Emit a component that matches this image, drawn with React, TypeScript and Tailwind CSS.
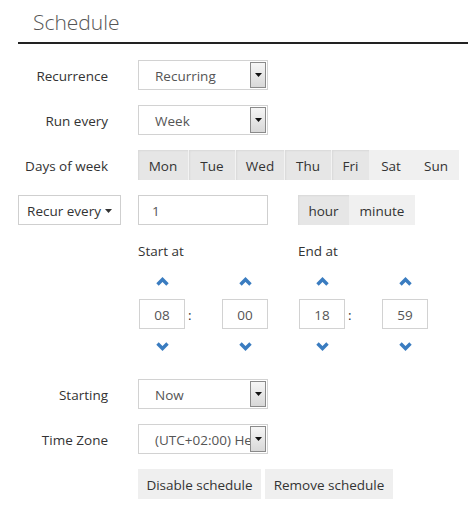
import React from "react";

function Arrow() {
  return (
    <div className="my-[1px] mr-[1px] w-[16px] self-stretch border border-[#8a8a8a] bg-gradient-to-b from-[#f6f6f6] to-[#d8d8d8] flex items-center justify-center">
      <svg width="7" height="4" viewBox="0 0 7 4">
        <polygon points="0,0 7,0 3.5,4" fill="#111" />
      </svg>
    </div>
  );
}

function Select({ value }: { value: string }) {
  return (
    <div className="flex h-[30px] w-[130px] border border-[#d2d2d2] bg-white">
      <div className="flex-1 overflow-hidden whitespace-nowrap pl-[16px] pt-[1px] text-[13.5px] leading-[28px] text-[#555]">{value}</div>
      <Arrow />
    </div>
  );
}

function Row({ label, children }: { label?: string; children: React.ReactNode }) {
  return (
    <div className="flex h-[30px] items-center">
      <div className="w-[120px] whitespace-nowrap pr-[30px] pt-[2px] text-right text-[13.5px] text-[#333]">{label}</div>
      {children}
    </div>
  );
}

function Chevron({ up }: { up?: boolean }) {
  return (
    <div className="flex h-[22px] w-[46px] items-center justify-center">
      <svg width="13" height="9" viewBox="0 0 13 9">
        <path
          d={up ? "M1.5 7.5 L6.5 2.5 L11.5 7.5" : "M1.5 1.5 L6.5 6.5 L11.5 1.5"}
          fill="none"
          stroke="#3a7cc0"
          strokeWidth="3.4"
          strokeLinecap="butt"
          strokeLinejoin="miter"
        />
      </svg>
    </div>
  );
}

function TimeInput({ v }: { v: string }) {
  return (
    <div className="h-[30px] w-[46px] border border-[#d2d2d2] bg-white pt-[1px] text-center text-[13.5px] leading-[28px] text-[#555]">{v}</div>
  );
}

function TimeGroup({ label, a, b }: { label: string; a: string; b: string }) {
  return (
    <div className="flex flex-col">
      <div className="h-[22px] text-[13.5px] leading-[22px] text-[#333]">{label}</div>
      <div className="mt-[8px] flex">
        <div className="ml-[1px] flex flex-col">
          <Chevron up />
          <div className="mt-[7px]"><TimeInput v={a} /></div>
          <div className="mt-[6px]"><Chevron /></div>
        </div>
        <div className="w-[37px] pl-[3px] pt-[30px] text-[13.5px] leading-[30px] text-[#333]">:</div>
        <div className="flex flex-col">
          <Chevron up />
          <div className="mt-[7px]"><TimeInput v={b} /></div>
          <div className="mt-[6px]"><Chevron /></div>
        </div>
      </div>
    </div>
  );
}

export default function App() {
  const days: [string, string, boolean][] = [
    ["Mon", "w-[50px]", true],
    ["Tue", "w-[47px]", true],
    ["Wed", "w-[49px]", true],
    ["Thu", "w-[47px]", true],
    ["Fri", "w-[38px]", true],
    ["Sat", "w-[44px]", false],
    ["Sun", "w-[46px]", false],
  ];
  return (
    <div className="h-[519px] w-[474px] bg-white font-['Open_Sans','Liberation_Sans',sans-serif]">
      <div className="ml-[18px] w-[450px]">
        <div className="h-[44px] border-b-2 border-[#222] pl-[15px] pt-[7px] text-[21px] font-light leading-[30px] text-[#555]">
          Schedule
        </div>
        <div className="mt-[16px] flex flex-col gap-[15px]">
          <Row label="Recurrence"><Select value="Recurring" /></Row>
          <Row label="Run every"><Select value="Week" /></Row>
          <Row label="Days of week">
            <div className="flex h-[30px] bg-[#f0f0f0]">
              {days.map(([d, w, sel], i) => (
                <div
                  key={d}
                  className={`${w} flex items-center justify-center pt-[2px] text-[13.5px] text-[#333] ${sel ? "bg-[#e6e6e6] shadow-[inset_1px_1px_2px_rgba(0,0,0,0.06)]" : ""} ${sel && i > 0 ? "border-l border-[#f3f3f3]" : ""}`}
                >
                  {d}
                </div>
              ))}
            </div>
          </Row>
          <div className="flex h-[30px] items-center">
            <div className="flex h-[30px] w-[103px] items-center justify-center border border-[#cfcfcf] bg-white pt-[2px] text-[13.5px] text-[#333]">
              Recur every
              <svg className="ml-[4px]" width="7" height="4" viewBox="0 0 7 4">
                <polygon points="0,0 7,0 3.5,4" fill="#333" />
              </svg>
            </div>
            <div className="ml-[17px] h-[30px] w-[130px] border border-[#cfcfcf] bg-white pl-[13px] pt-[1px] text-[13.5px] leading-[28px] text-[#555]">1</div>
            <div className="ml-[30px] flex h-[30px] bg-[#f0f0f0] text-[13.5px] text-[#333]">
              <div className="flex w-[51px] items-center justify-center bg-[#e6e6e6] pt-[2px] shadow-[inset_1px_1px_2px_rgba(0,0,0,0.06)]">hour</div>
              <div className="flex w-[66px] items-center justify-center pt-[2px]">minute</div>
            </div>
          </div>
        </div>
        <div className="mt-[15px] flex pl-[120px]">
          <TimeGroup label="Start at" a="08" b="00" />
          <div className="ml-[30px]">
            <TimeGroup label="End at" a="18" b="59" />
          </div>
        </div>
        <div className="mt-[22px] flex flex-col gap-[15px]">
          <Row label="Starting"><Select value="Now" /></Row>
          <Row label="Time Zone"><Select value="(UTC+02:00) Helsinki, Kyiv" /></Row>
          <div className="flex h-[30px] pl-[120px] text-[13.5px] text-[#333]">
            <div className="flex w-[123px] items-center justify-center bg-[#efefef] pt-[2px]">Disable schedule</div>
            <div className="ml-[4px] flex w-[128px] items-center justify-center bg-[#efefef] pt-[2px]">Remove schedule</div>
          </div>
        </div>
      </div>
    </div>
  );
}
